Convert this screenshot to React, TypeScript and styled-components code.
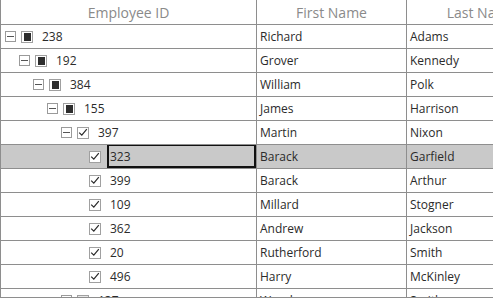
import React from 'react'
import styled, { createGlobalStyle } from 'styled-components'

const GlobalStyle = createGlobalStyle`
  html, body {
    margin: 0;
    padding: 0;
    background: #ffffff;
  }
  body {
    font-family: 'Open Sans', 'Noto Sans', sans-serif;
  }
`

type CheckState = 'checked' | 'partial' | 'empty'

type Employee = {
  id: string,
  first: string,
  last: string,
  level: number,
  check: CheckState,
  expandable?: boolean
}

const employees: Employee[] = [
  { id: '238', first: 'Richard', last: 'Adams', level: 0, check: 'partial', expandable: true },
  { id: '192', first: 'Grover', last: 'Kennedy', level: 1, check: 'partial', expandable: true },
  { id: '384', first: 'William', last: 'Polk', level: 2, check: 'partial', expandable: true },
  { id: '155', first: 'James', last: 'Harrison', level: 3, check: 'partial', expandable: true },
  { id: '397', first: 'Martin', last: 'Nixon', level: 4, check: 'checked', expandable: true },
  { id: '323', first: 'Barack', last: 'Garfield', level: 5, check: 'checked' },
  { id: '399', first: 'Barack', last: 'Arthur', level: 5, check: 'checked' },
  { id: '109', first: 'Millard', last: 'Stogner', level: 5, check: 'checked' },
  { id: '362', first: 'Andrew', last: 'Jackson', level: 5, check: 'checked' },
  { id: '20', first: 'Rutherford', last: 'Smith', level: 5, check: 'checked' },
  { id: '496', first: 'Harry', last: 'McKinley', level: 5, check: 'checked' },
  { id: '137', first: 'Woodrow', last: 'Smith', level: 4, check: 'empty', expandable: true }
]

const SELECTED_ID = '323'

const StyledGrid = styled('div')`
  width: 493px;
  height: 298px;
  box-sizing: border-box;
  border-left: 1px solid #8e8e8e;
  border-bottom: 1px solid #8e8e8e;
  overflow: hidden;
  display: flex;
  flex-direction: column;
`

type RowProps = {
  $selected?: boolean
}

const StyledRow = styled('div')<RowProps>`
  display: flex;
  flex-shrink: 0;
  height: 24px;
  box-sizing: border-box;
  border-bottom: 1px solid #8e8e8e;
  background: ${(props) => (props.$selected ? '#c9c9c9' : '#ffffff')};
`

const StyledHeaderRow = styled(StyledRow)`
  height: 25px;
`

type CellProps = {
  $width: number
}

const StyledCell = styled('div')<CellProps>`
  flex-shrink: 0;
  width: ${(props) => props.$width}px;
  box-sizing: border-box;
  border-right: 1px solid #8e8e8e;
  display: flex;
  align-items: center;
  padding-left: 3px;
  font-size: 12px;
  color: #2b2b2b;
  white-space: nowrap;
  overflow: hidden;
`

const StyledHeaderCell = styled(StyledCell)`
  justify-content: center;
  padding-left: 0;
  font-size: 14px;
  color: #8a8a8a;
`

const StyledTreeCell = styled(StyledCell)`
  padding-left: 0;
`

const StyledIndent = styled('span')<CellProps>`
  flex-shrink: 0;
  width: ${(props) => props.$width}px;
`

const StyledExpander = styled('span')`
  flex-shrink: 0;
  width: 11px;
  height: 11px;
  box-sizing: border-box;
  border: 1px solid #9a9a9a;
  display: flex;
  align-items: center;
  justify-content: center;
  margin-right: 5px;

  &::after {
    content: '';
    width: 7px;
    height: 1px;
    background: #555555;
  }
`

const StyledLeafSpacer = styled('span')`
  flex-shrink: 0;
  width: 14px;
`

type CheckBoxProps = {
  $state: CheckState
}

const StyledCheckBox = styled('span')<CheckBoxProps>`
  flex-shrink: 0;
  width: 12px;
  height: 12px;
  box-sizing: border-box;
  border: 1px solid #a0a0a0;
  background: ${(props) => (props.$state === 'empty' ? '#e6e6e6' : '#ffffff')};
  display: flex;
  align-items: center;
  justify-content: center;
`

const StyledPartialMark = styled('span')`
  width: 7px;
  height: 8px;
  background: #2e2e2e;
`

type TextBoxProps = {
  $current?: boolean
}

const StyledTextBox = styled('span')<TextBoxProps>`
  flex: 1;
  align-self: stretch;
  display: flex;
  align-items: center;
  margin-left: 6px;
  padding-left: 1px;
  box-sizing: border-box;
  border: 2px solid ${(props) => (props.$current ? '#111111' : 'transparent')};
  margin-top: ${(props) => (props.$current ? '-1px' : '0')};
`

const columns = [
  { title: 'Employee ID', width: 256 },
  { title: 'First Name', width: 150 },
  { title: 'Last Name', width: 150 }
]

function CheckMark() {
  return (
    <svg width="10" height="9" viewBox="0 0 10 9">
      <path d="M1.2 4.6 L3.8 7.2 L8.8 1.2" fill="none" stroke="#2a2a2a" strokeWidth="1.2" />
    </svg>
  )
}

function CheckBox({ state }: { state: CheckState }) {
  return (
    <StyledCheckBox $state={state}>
      {state === 'checked' && <CheckMark />}
      {state === 'partial' && <StyledPartialMark />}
    </StyledCheckBox>
  )
}

function EmployeeRow({ employee }: { employee: Employee }) {
  const selected = employee.id === SELECTED_ID

  return (
    <StyledRow $selected={selected}>
      <StyledTreeCell $width={columns[0].width}>
        <StyledIndent $width={4 + employee.level * 14} />
        {employee.expandable ? <StyledExpander /> : <StyledLeafSpacer />}
        <CheckBox state={employee.check} />
        <StyledTextBox $current={selected}>{employee.id}</StyledTextBox>
      </StyledTreeCell>
      <StyledCell $width={columns[1].width}>{employee.first}</StyledCell>
      <StyledCell $width={columns[2].width}>{employee.last}</StyledCell>
    </StyledRow>
  )
}

function App() {
  return (
    <>
      <GlobalStyle />
      <StyledGrid>
        <StyledHeaderRow>
          {columns.map(({ title, width }) => (
            <StyledHeaderCell key={title} $width={width}>{title}</StyledHeaderCell>
          ))}
        </StyledHeaderRow>
        {employees.map((employee) => (
          <EmployeeRow key={employee.id} employee={employee} />
        ))}
      </StyledGrid>
    </>
  )
}

export default App
